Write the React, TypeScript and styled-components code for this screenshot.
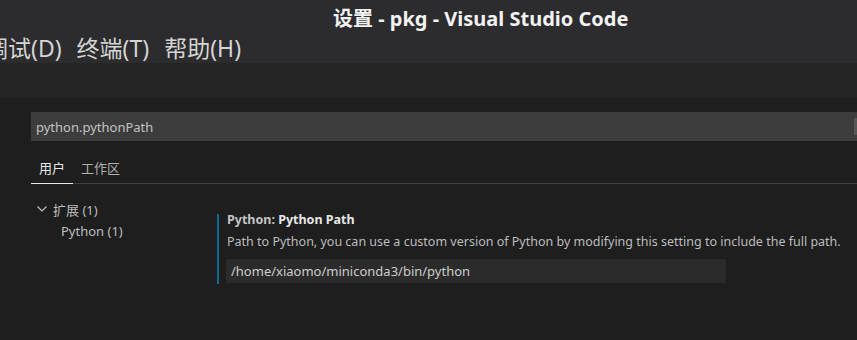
import React from 'react';
import styled, { createGlobalStyle } from 'styled-components';

const GlobalStyle = createGlobalStyle`
  html, body {
    margin: 0;
    padding: 0;
    background: #1e1e1e;
  }
  body {
    width: 857px;
    height: 340px;
    overflow: hidden;
    font-family: 'Noto Sans', 'Noto Sans CJK SC', sans-serif;
  }
`;

const menuItems = ['调试(D)', '终端(T)', '帮助(H)'];
const tabs = [
  { label: '用户', active: true },
  { label: '工作区', active: false },
];

const App: React.FC = () => {
  return (
    <Window>
      <GlobalStyle />
      <TitleBar>
        <Title>设置 - pkg - Visual Studio Code</Title>
        <MenuBar>
          {menuItems.map((item) => (
            <MenuItem key={item}>{item}</MenuItem>
          ))}
        </MenuBar>
      </TitleBar>
      <TabStrip />
      <Editor>
        <SearchBox>
          <SearchText>python.pythonPath</SearchText>
          <SearchScroll />
        </SearchBox>
        <Tabs>
          {tabs.map((tab) => (
            <Tab key={tab.label} active={tab.active}>
              {tab.label}
            </Tab>
          ))}
        </Tabs>
        <Body>
          <TocColumn>
            <TocRow>
              <Chevron viewBox="0 0 16 16">
                <path d="M3.5 5.5 L8 10 L12.5 5.5" fill="none" stroke="#c5c5c5" strokeWidth="1.1" />
              </Chevron>
              扩展 (1)
            </TocRow>
            <TocRow indent>Python (1)</TocRow>
          </TocColumn>
          <SettingItem>
            <SettingTitle>
              <Category>Python: </Category>
              <SettingName>Python Path</SettingName>
            </SettingTitle>
            <Description>
              Path to Python, you can use a custom version of Python by modifying this setting to include the full path.
            </Description>
            <ValueInput>/home/xiaomo/miniconda3/bin/python</ValueInput>
          </SettingItem>
        </Body>
      </Editor>
    </Window>
  );
};

const Window = styled.div`
  width: 857px;
  height: 340px;
  background: #1e1e1e;
  overflow: hidden;
`;

const TitleBar = styled.div`
  height: 63px;
  background: #2c2b2d;
  display: flex;
  flex-direction: column;
`;

const Title = styled.div`
  padding: 5px 0 0 333px;
  height: 28px;
  color: #f2f2f2;
  font-size: 20px;
  font-weight: 700;
  line-height: 28px;
  white-space: nowrap;
`;

const MenuBar = styled.div`
  display: flex;
  gap: 15px;
  margin-left: -15px;
  margin-top: 0;
`;

const MenuItem = styled.span`
  color: #d4d4d4;
  font-size: 23px;
  line-height: 30px;
  white-space: nowrap;
`;

const TabStrip = styled.div`
  height: 35px;
  background: #252526;
`;

const Editor = styled.div`
  padding: 14px 0 0 31px;
`;

const SearchBox = styled.div`
  position: relative;
  height: 29px;
  background: #3c3c3c;
  display: flex;
  align-items: center;
  padding-left: 5px;
`;

const SearchText = styled.span`
  color: #c2c2c2;
  font-size: 13px;
`;

const SearchScroll = styled.div`
  position: absolute;
  right: 0;
  top: 6px;
  width: 3px;
  height: 17px;
  background: #555555;
`;

const Tabs = styled.div`
  display: flex;
  margin-top: 14px;
  border-bottom: 1px solid #3f3f3f;
`;

const Tab = styled.div<{ active: boolean }>`
  padding: 0 8px;
  height: 28px;
  line-height: 27px;
  font-size: 13px;
  color: ${(p) => (p.active ? '#e7e7e7' : '#b0b0b0')};
  border-bottom: 1px solid ${(p) => (p.active ? '#e7e7e7' : 'transparent')};
  margin-bottom: -1px;
`;

const Body = styled.div`
  display: flex;
  margin-top: 14px;
`;

const TocColumn = styled.div`
  width: 186px;
  flex-shrink: 0;
`;

const TocRow = styled.div<{ indent?: boolean }>`
  display: flex;
  align-items: center;
  height: 22px;
  padding-left: ${(p) => (p.indent ? '30px' : '3px')};
  color: #bdbdbd;
  font-size: 13px;
  white-space: nowrap;
`;

const Chevron = styled.svg`
  width: 16px;
  height: 16px;
  margin-right: 3px;
`;

const SettingItem = styled.div`
  margin-top: 16px;
  border-left: 2px solid #0f6b8f;
  padding: 0 0 1px 8px;
  display: flex;
  flex-direction: column;
  align-self: flex-start;
`;

const SettingTitle = styled.div`
  font-size: 12.5px;
  font-weight: 700;
  line-height: 16px;
  margin-top: -2px;
`;

const Category = styled.span`
  color: #c4c4c4;
`;

const SettingName = styled.span`
  color: #e8e8e8;
`;

const Description = styled.div`
  color: #bcbcbc;
  font-size: 12.5px;
  line-height: 18px;
  margin-top: 5px;
  white-space: nowrap;
`;

const ValueInput = styled.div`
  margin-top: 8px;
  margin-left: -1px;
  width: 495px;
  height: 24px;
  padding-left: 5px;
  background: #2b2b2b;
  color: #cccccc;
  font-size: 13px;
  line-height: 24px;
`;

export default App;
